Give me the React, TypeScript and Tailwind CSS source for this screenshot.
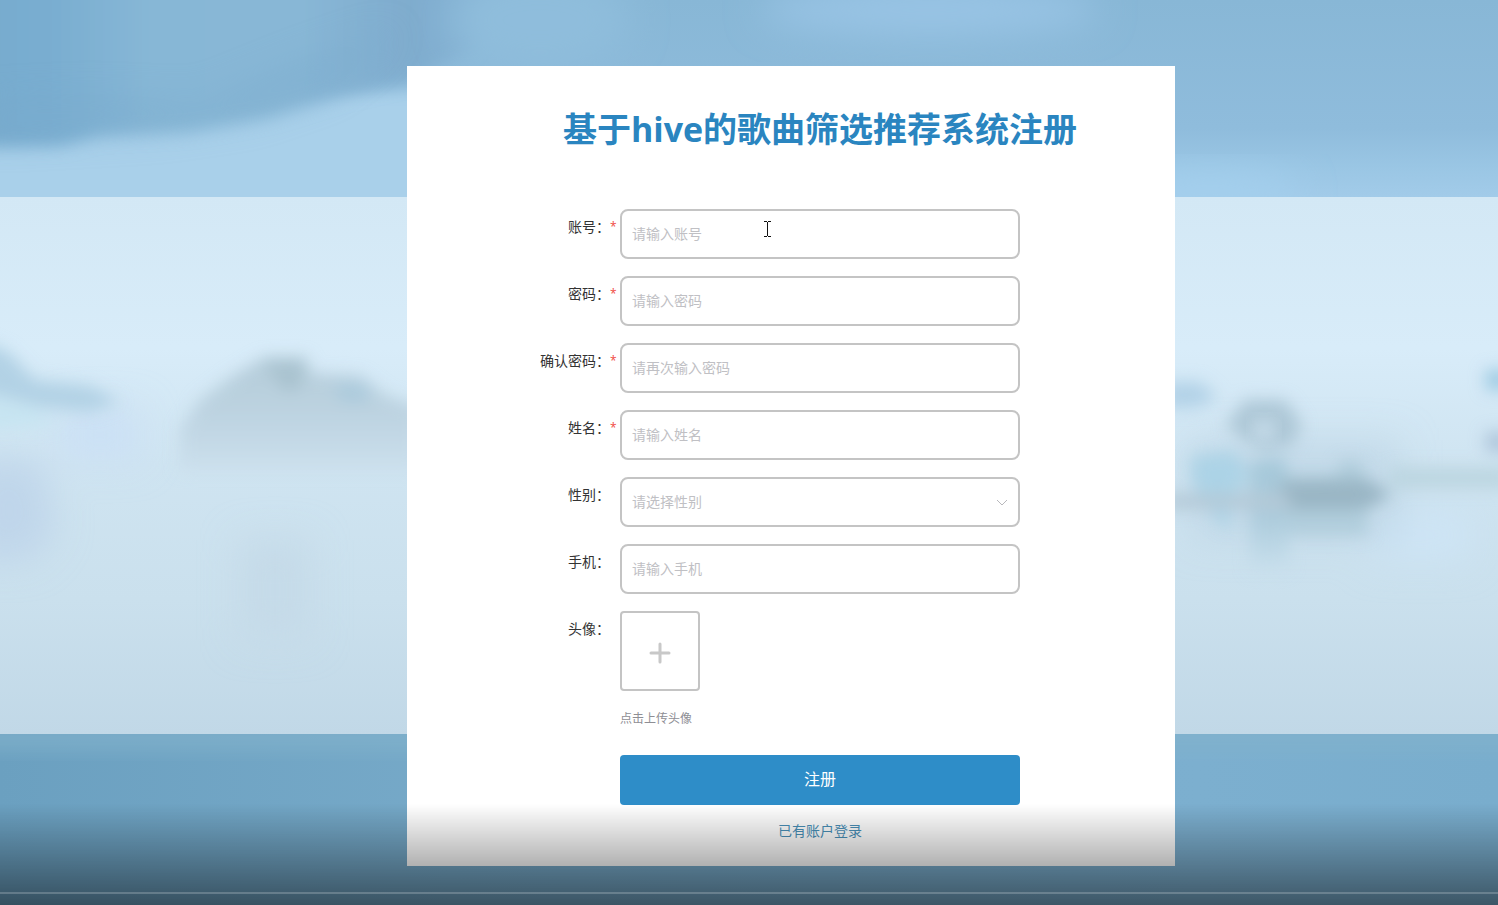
import React, { useState } from 'react';

interface Field {
  id: string;
  label: string;
  placeholder: string;
  type: 'text' | 'password' | 'select';
  required?: boolean;
}

const FIELDS: Field[] = [
  { id: 'account', label: '账号：', placeholder: '请输入账号', type: 'text', required: true },
  { id: 'password', label: '密码：', placeholder: '请输入密码', type: 'password', required: true },
  { id: 'confirm', label: '确认密码：', placeholder: '请再次输入密码', type: 'password', required: true },
  { id: 'name', label: '姓名：', placeholder: '请输入姓名', type: 'text', required: true },
  { id: 'gender', label: '性别：', placeholder: '请选择性别', type: 'select' },
  { id: 'phone', label: '手机：', placeholder: '请输入手机', type: 'text' },
];

// Sky, icebergs and water behind the form
const Scenery: React.FC = () => (
  <svg
    className="absolute inset-0 h-full w-full"
    viewBox="0 0 1498 905"
    preserveAspectRatio="none"
    aria-hidden="true"
  >
    <defs>
      <linearGradient id="sky" x1="0" y1="0" x2="0" y2="1">
        <stop offset="0" stopColor="#88b7d6" />
        <stop offset="0.65" stopColor="#8fbcdc" />
        <stop offset="0.85" stopColor="#9ac6e4" />
        <stop offset="1" stopColor="#a2cbe9" />
      </linearGradient>
      <linearGradient id="cloud" x1="0" y1="0" x2="1" y2="0">
        <stop offset="0" stopColor="#76aacd" />
        <stop offset="0.18" stopColor="#79add0" />
        <stop offset="0.35" stopColor="#87b7d6" />
        <stop offset="0.6" stopColor="#88b7d6" />
        <stop offset="0.78" stopColor="#7facce" />
        <stop offset="1" stopColor="#88b6d7" />
      </linearGradient>
      <linearGradient id="mist" x1="0" y1="0" x2="0" y2="1">
        <stop offset="0" stopColor="#d3e8f5" />
        <stop offset="0.28" stopColor="#d8ecf9" />
        <stop offset="0.5" stopColor="#cfe4f1" />
        <stop offset="0.75" stopColor="#cae0ed" />
        <stop offset="1" stopColor="#c1d8e7" />
      </linearGradient>
      <linearGradient id="berg" x1="0" y1="0" x2="0" y2="1">
        <stop offset="0" stopColor="#b4ccd9" />
        <stop offset="0.5" stopColor="#bdd3e1" />
        <stop offset="1" stopColor="#cbdfec" />
      </linearGradient>
      <linearGradient id="reflection" x1="0" y1="0" x2="0" y2="1">
        <stop offset="0" stopColor="#a5c8d9" />
        <stop offset="0.5" stopColor="#aacadb" />
        <stop offset="1" stopColor="#c8dfec" />
      </linearGradient>
      <linearGradient id="water" x1="0" y1="0" x2="1" y2="0">
        <stop offset="0" stopColor="#6ba0c0" />
        <stop offset="0.3" stopColor="#76a9c8" />
        <stop offset="0.8" stopColor="#7cafcf" />
        <stop offset="1" stopColor="#79adcd" />
      </linearGradient>
      <filter id="soft" x="-30%" y="-30%" width="160%" height="160%">
        <feGaussianBlur stdDeviation="8" />
      </filter>
      <filter id="softer" x="-50%" y="-50%" width="200%" height="200%">
        <feGaussianBlur stdDeviation="18" />
      </filter>
      <clipPath id="top-band">
        <rect width="1498" height="197" />
      </clipPath>
      <clipPath id="middle-band">
        <rect y="197" width="1498" height="537" />
      </clipPath>
      <clipPath id="bottom-band">
        <rect y="734" width="1498" height="171" />
      </clipPath>
    </defs>

    <g clipPath="url(#top-band)">
      <rect width="1498" height="197" fill="url(#sky)" />
      <path d="M-40 90H460V230H-40Z" fill="#a9d0ea" filter="url(#soft)" />
      <path
        d="M-60-40H540L470 50L410 80L340 96L270 117L190 132L100 136L60 146L-60 148Z"
        fill="url(#cloud)"
        filter="url(#soft)"
      />
      <path
        d="M-20 105L90 100L200 105L300 65L400 30L330 85L250 112L160 125L-20 135Z"
        fill="#78a9cb"
        opacity="0.5"
        filter="url(#softer)"
      />
      <ellipse cx="540" cy="20" rx="90" ry="50" fill="#8fbddc" filter="url(#softer)" />
      <ellipse cx="930" cy="10" rx="170" ry="26" fill="#99c4e5" filter="url(#softer)" />
      <ellipse cx="1210" cy="190" rx="90" ry="18" fill="#a4d0ee" filter="url(#softer)" />
    </g>

    <g clipPath="url(#middle-band)">
      <rect y="197" width="1498" height="537" fill="url(#mist)" />
      <g filter="url(#softer)">
        <path d="M-30 460H40L55 530L30 560H-30Z" fill="#bfd5ea" />
        <path d="M240 540H310V640H240Z" fill="#c5dae8" />
        <path d="M1370 510H1470V560H1370Z" fill="#cde4f5" />
        <path d="M1190 440H1400V540H1190Z" fill="#bdd6e5" opacity="0.7" />
        <path d="M60 410H140V460H60Z" fill="#cbe0f5" />
      </g>
      <g filter="url(#soft)">
        <path d="M-20 340L8 352L35 380L90 386L120 402L90 412L40 408L-20 392Z" fill="#b2d2e5" />
        <path d="M-20 396L30 408L60 425L-20 430Z" fill="#c6e4f1" />
        <path d="M180 430L200 400L230 378L260 360L300 362L315 374L360 376L385 395L420 408V470H180Z" fill="url(#berg)" />
        <path d="M262 358H308L300 388L284 392Z" fill="#a9c2cf" />
        <path d="M335 384H368V402H340Z" fill="#abcadd" />
        <path d="M1165 382H1200L1218 398L1195 408H1165Z" fill="#b2d2e7" />
        <path
          d="M1226 425L1245 400L1285 400L1302 424L1292 446L1262 450L1244 440Z"
          fill="#aec8d7"
        />
        <path d="M1192 456L1235 452L1248 475L1230 500V530L1212 515L1192 480Z" fill="#acd3e6" />
        <path d="M1250 462L1285 458L1290 500L1288 570H1250Z" fill="url(#reflection)" />
        <path d="M1285 476H1335L1342 460L1362 462L1368 535H1290Z" fill="#b0cddc" />
        <path d="M1280 480L1365 478L1392 494L1365 510H1280Z" fill="#9ab6c5" />
        <path d="M1165 494H1290V509H1165Z" fill="#b4c9d7" />
        <path d="M1390 468H1510V488H1390Z" fill="#bbd5e0" />
        <path d="M1486 370H1510V390H1486Z" fill="#9dcae2" />
        <path d="M1486 432H1510V452H1486Z" fill="#adc5da" />
      </g>
      <circle cx="1264" cy="430" r="11" fill="#c6dcea" filter="url(#soft)" />
    </g>

    <g clipPath="url(#bottom-band)">
      <rect y="734" width="1498" height="171" fill="url(#water)" />
      <rect x="-20" y="724" width="1540" height="28" fill="#82b3cc" opacity="0.6" filter="url(#soft)" />
    </g>
  </svg>
);

const TextCursor: React.FC = () => (
  <svg
    className="pointer-events-none absolute left-36 top-3 h-4 w-2"
    viewBox="0 0 8 16"
    fill="#111111"
    shapeRendering="crispEdges"
    aria-hidden="true"
  >
    <path d="M0 0H3V1H4V0H7V1H4V15H7V16H4V15H3V16H0V15H3V1H0Z" />
  </svg>
);

const App: React.FC = () => {
  const [values, setValues] = useState<Record<string, string>>({});

  const update = (id: string, value: string) => {
    setValues((prev) => ({ ...prev, [id]: value }));
  };

  const fieldClass =
    'block h-[50px] w-full rounded-lg border-2 border-[#c4c4c4] bg-white px-[10px] text-sm outline-none placeholder:text-[#c0c0c4]';

  return (
    <div className="relative flex min-h-screen justify-center overflow-hidden bg-[#8ab9d9] pb-[39px] pl-[84px] pt-[66px] font-['Open_Sans','Noto_Sans_CJK_SC',sans-serif]">
      <Scenery />

      <main className="relative w-full max-w-[768px] bg-white pl-[113px] pr-[155px] pt-[39px]">
        <h1 className="ml-[100px] flex justify-center whitespace-nowrap text-[34px] font-bold leading-[48px] text-[#2a85c0]">
          基于hive的歌曲筛选推荐系统注册
        </h1>

        <form className="mt-14" onSubmit={(e) => e.preventDefault()}>
          {FIELDS.map((field) => (
            <div key={field.id} className="mb-[17px] flex">
              <label
                htmlFor={field.id}
                className="w-[90px] shrink-0 whitespace-nowrap text-right text-sm leading-9 text-[#333333]"
              >
                {field.label}
              </label>
              <span className="w-[10px] shrink-0 text-xs leading-9 text-[#f04a3e]">
                {field.required ? '*' : ''}
              </span>
              <div className="relative min-w-0 flex-1">
                {field.type === 'select' ? (
                  <>
                    <select
                      id={field.id}
                      value={values[field.id] ?? ''}
                      onChange={(e) => update(field.id, e.target.value)}
                      className={`${fieldClass} appearance-none ${values[field.id] ? 'text-[#333333]' : 'text-[#c0c0c4]'}`}
                    >
                      <option value="" disabled>{field.placeholder}</option>
                      <option value="male">男</option>
                      <option value="female">女</option>
                    </select>
                    <svg
                      className="pointer-events-none absolute right-3 top-[22px] h-[7px] w-3"
                      viewBox="0 0 12 7"
                      fill="none"
                      stroke="#b8b8bc"
                      aria-hidden="true"
                    >
                      <path d="M1 1L6 6L11 1" />
                    </svg>
                  </>
                ) : (
                  <input
                    id={field.id}
                    type={field.type}
                    placeholder={field.placeholder}
                    value={values[field.id] ?? ''}
                    onChange={(e) => update(field.id, e.target.value)}
                    className={`${fieldClass} pb-0.5 text-[#333333]`}
                  />
                )}
                {field.id === 'account' && <TextCursor />}
              </div>
            </div>
          ))}

          <div className="flex">
            <label
              htmlFor="avatar"
              className="mr-[10px] w-[90px] shrink-0 text-right text-sm leading-9 text-[#333333]"
            >
              头像：
            </label>
            <div>
              <label
                htmlFor="avatar"
                aria-label="点击上传头像"
                className="flex h-20 w-20 cursor-pointer items-center justify-center rounded border-2 border-[#c4c4c4] pt-1"
              >
                <svg
                  className="h-[22px] w-[22px]"
                  viewBox="0 0 22 22"
                  stroke="#c8c8c8"
                  strokeWidth="3"
                  strokeLinecap="round"
                  aria-hidden="true"
                >
                  <path d="M2 11H20M11 2V20" />
                </svg>
              </label>
              <input id="avatar" type="file" accept="image/*" className="sr-only" />
              <p className="mt-[18px] text-xs leading-5 text-[#8e8e94]">点击上传头像</p>
            </div>
          </div>

          <div className="ml-[100px] mt-[26px] flex flex-col items-center pb-[25px]">
            <button type="submit" className="h-[50px] w-full rounded bg-[#2e8dc8] pb-0.5 text-base text-white">
              注册
            </button>
            <a href="#login" className="mt-4 text-sm leading-5 text-[#4a90b8]">
              已有账户登录
            </a>
          </div>
        </form>
      </main>

      {/* Player shade and progress line along the bottom edge */}
      <div className="pointer-events-none absolute inset-x-0 bottom-0 h-[101px] bg-linear-to-b from-black/0 to-black/50">
        <div className="absolute inset-x-0 bottom-[11px] h-[2px] bg-white/20" />
      </div>
    </div>
  );
};

export default App;
